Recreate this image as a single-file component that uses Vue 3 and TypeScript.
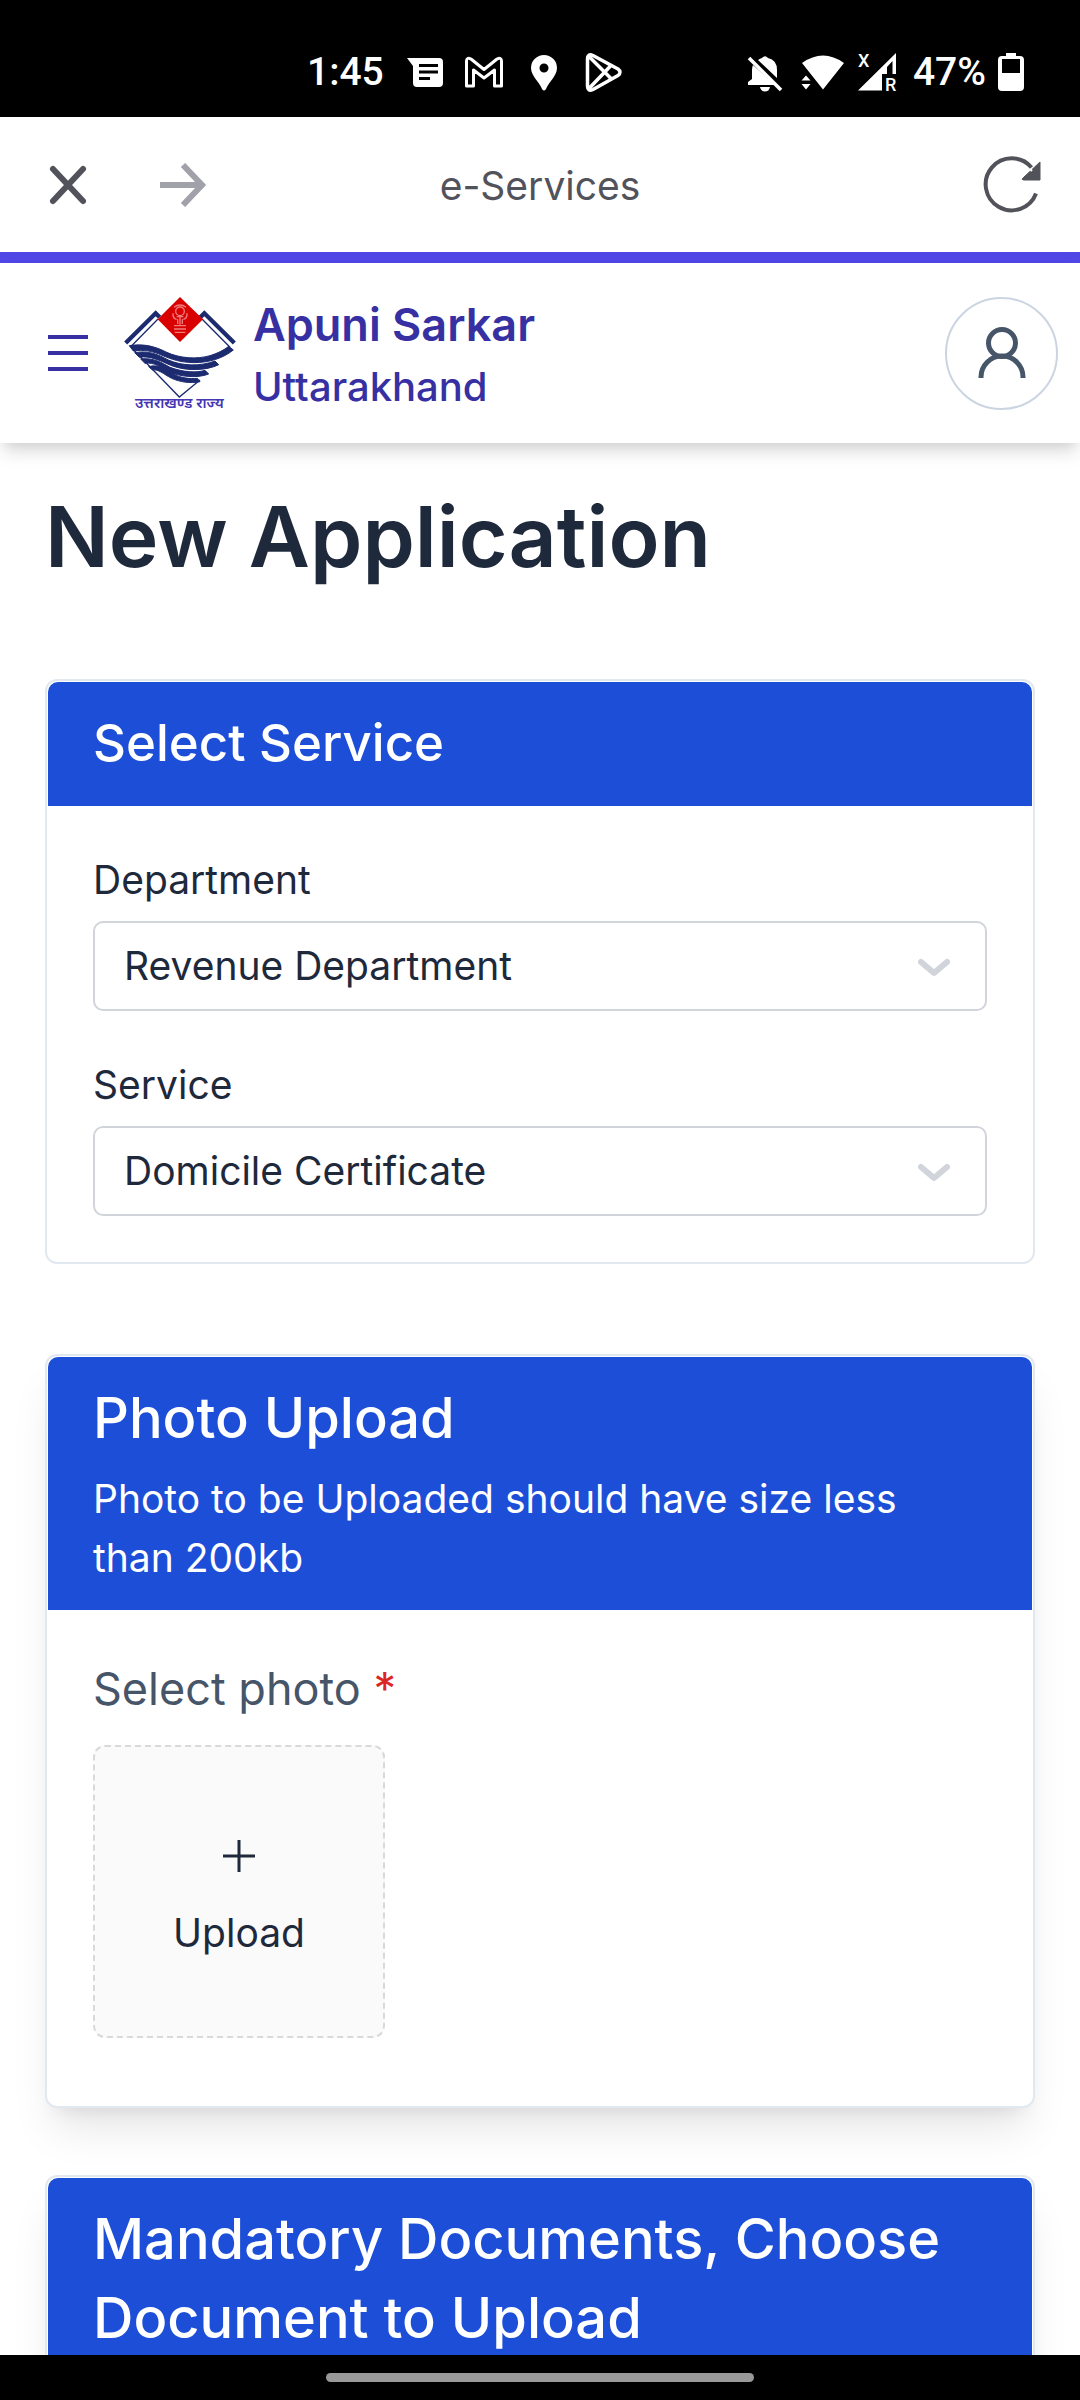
<script setup lang="ts">
import { ref } from 'vue'

interface Field {
  id: string
  label: string
  options: string[]
}

const fields: Field[] = [
  { id: 'department', label: 'Department', options: ['Revenue Department'] },
  { id: 'service', label: 'Service', options: ['Domicile Certificate'] },
]

const selected = ref<Record<string, string>>({
  department: 'Revenue Department',
  service: 'Domicile Certificate',
})
</script>

<template>
  <div class="screen">
    <div class="status">
      <div class="status-left">
        <span class="status-text">1:45</span>
        <svg class="status-icon" viewBox="0 0 40 40" aria-hidden="true">
          <path fill="#fff" fill-rule="evenodd" d="M3 6H35Q39 6 39 10V31Q39 35 35 35H13Q9 35 9 31V14ZM15 12V15H34V12ZM15 18.500V21.500H34V18.500ZM15 25V28H26V25Z" />
        </svg>
        <svg class="status-icon" viewBox="0 0 40 40" aria-hidden="true">
          <path fill="none" stroke="#fff" stroke-width="3" stroke-linejoin="round" d="M2.500 34V9Q2.500 5 7 7L20 17.500L33 7Q37.500 5 37.500 9V34H30.500V18L20 26L9.500 18V34Z" />
        </svg>
        <svg class="status-icon" viewBox="0 0 40 40" aria-hidden="true">
          <path fill="#fff" fill-rule="evenodd" d="M20 3A13 13 0 0 0 7 16C7 24 16 31 18 37Q20 40 22 37C24 31 33 24 33 16A13 13 0 0 0 20 3ZM20 11.500A4.500 4.500 0 1 1 20 20.500A4.500 4.500 0 1 1 20 11.500Z" />
        </svg>
        <svg class="status-icon" viewBox="0 0 40 40" aria-hidden="true">
          <path fill="none" stroke="#fff" stroke-width="3.500" stroke-linejoin="round" d="M3.500 7Q3.500 1 9 3.500L34 17Q38 20 34 23.500L9 37.500Q3.500 40 3.500 34ZM5 4.500L27 26.500M5 36.500L27 13.500" />
        </svg>
      </div>
      <div class="status-right">
        <svg class="status-icon" viewBox="0 0 40 40" aria-hidden="true">
          <path fill="#fff" d="M8 13L30 33H3V30L7 27V18Q7 15 8 13ZM13 8Q15 6.500 17 6Q20 2.500 23 6Q32 8 32 18V26ZM15 35H25Q24 39.500 20 39.500T15 35Z" />
          <path stroke="#fff" stroke-width="3.500" d="M4 6L36 38" />
        </svg>
        <svg class="wifi" viewBox="0 0 44 40" aria-hidden="true">
          <path fill="#fff" d="M1 11Q22 -4 43 11L22 37.500ZM5 23.500L9.500 28.500H0.500ZM0.500 32H9.500L5 37.500Z" />
        </svg>
        <svg class="signal" viewBox="-4 -6 48 52" aria-hidden="true">
          <path fill="#fff" fill-rule="evenodd" d="M1 38.500L39 1V22H35.500V9L30 15V22H25V38.500Z" />
          <text x="1" y="15" class="sim-mark">X</text>
          <text x="28" y="39" class="sim-mark">R</text>
        </svg>
        <span class="status-text">47%</span>
        <svg class="battery" viewBox="0 0 26 40" aria-hidden="true">
          <path fill="#fff" fill-rule="evenodd" d="M8 1H18V4H22Q26 4 26 8V35Q26 39 22 39H4Q0 39 0 35V8Q0 4 4 4H8ZM4 7V21H22V7Z" />
        </svg>
      </div>
    </div>

    <div class="toolbar">
      <div class="toolbar-side">
        <button class="icon-button" type="button" aria-label="Close">
          <svg width="44" height="44" viewBox="0 0 44 44"><path d="M7 6L37 38M37 6L7 38" stroke="#52525b" stroke-width="6" stroke-linecap="round" /></svg>
        </button>
        <button class="icon-button" type="button" aria-label="Forward">
          <svg width="50" height="44" viewBox="0 0 50 44"><path d="M2 22H44M25 2L44 22L25 42" fill="none" stroke="#a1a1aa" stroke-width="6" /></svg>
        </button>
      </div>
      <span class="toolbar-title">e-Services</span>
      <div class="toolbar-side end">
        <button class="icon-button" type="button" aria-label="Reload">
          <svg width="60" height="58" viewBox="0 0 60 58">
            <path d="M49.500 11.500A26 26 0 1 0 54 37.500" fill="none" stroke="#52525b" stroke-width="4" />
            <path d="M41 22L58 6V24H42Q39 24 41 22Z" fill="#52525b" stroke="#52525b" stroke-width="1" />
            <path d="M48 13L50 15" stroke="#fff" stroke-width="2" />
          </svg>
        </button>
      </div>
    </div>

    <header class="header">
      <button class="icon-button" type="button" aria-label="Menu">
        <svg width="40" height="40" viewBox="0 0 40 40"><path d="M0 4H40M0 20H40M0 36H40" stroke="#3730a3" stroke-width="4" /></svg>
      </button>
      <svg class="logo" viewBox="72 54 336 390" role="img" aria-label="उत्तराखण्ड राज्य">
        <g fill="none" stroke="#1c2a70">
          <path stroke-width="13" d="M77 219L167 130L179 142M403 219L313 130L301 142" />
          <path stroke-width="4" d="M174 147L92 230L150 290L238 381L300 330M306 147L390 232" />
        </g>
        <g fill="#1c2a70" stroke="#1c2a70" stroke-width="3">
          <path d="M88 227C130 220 165 229 198 246C240 266 292 268 330 257C355 249 372 240 386 229L400 240C370 264 330 278 280 278C240 277 215 268 186 256C158 243 130 238 100 243Z" />
          <path d="M104 248C150 240 175 255 205 270C245 288 300 290 345 273L356 284C320 302 260 304 215 287C180 272 150 256 118 262Z" />
          <path d="M122 267C160 262 185 278 210 292C250 307 290 309 315 301L326 312C290 326 240 320 205 305C180 292 165 276 135 280Z" />
          <path d="M146 290C175 281 195 299 220 312C245 325 270 327 292 325L300 335C270 341 240 336 215 325C190 312 175 297 158 300Z" />
        </g>
        <path fill="#d80000" d="M240 81L309 148L240 216L173 148Z" />
        <g fill="none" stroke="#ef7d7d" stroke-width="4">
          <circle cx="240" cy="124" r="13" />
          <path d="M222 112Q240 98 258 112M219 130Q218 146 230 148M261 130Q262 146 250 148M230 140H250M233 148V162M240 140V164M247 148V162M222 167H258M222 177H258M224 187H256" />
        </g>
        <text x="238" y="415" text-anchor="middle" class="logo-text">उत्तराखण्ड राज्य</text>
      </svg>
      <div class="brand">
        <span class="brand-name">Apuni Sarkar</span>
        <span class="brand-region">Uttarakhand</span>
      </div>
      <button class="avatar" type="button" aria-label="Account">
        <svg width="52" height="56" viewBox="0 0 52 56"><g fill="none" stroke="#475569" stroke-width="5"><circle cx="26" cy="18" r="13.500" /><path d="M5 53V52A21 21 0 0 1 47 52V53" /></g></svg>
      </button>
    </header>

    <main class="content">
      <h1>New Application</h1>

      <section class="card">
        <div class="card-head single"><h2>Select Service</h2></div>
        <div class="card-body fields">
          <div v-for="field in fields" :key="field.id" class="field">
            <label :for="field.id">{{ field.label }}</label>
            <div class="select-wrap">
              <select :id="field.id" v-model="selected[field.id]">
                <option v-for="option in field.options" :key="option">{{ option }}</option>
              </select>
              <svg class="chevron" width="34" height="22" viewBox="0 0 34 22" aria-hidden="true"><path d="M4 5L17 16L30 5" fill="none" stroke="#d1d5db" stroke-width="6" stroke-linecap="round" stroke-linejoin="round" /></svg>
            </div>
          </div>
        </div>
      </section>

      <section class="card raised">
        <div class="card-head">
          <h2 class="large">Photo Upload</h2>
          <p>Photo to be Uploaded should have size less than 200kb</p>
        </div>
        <div class="card-body photo">
          <label class="photo-label" for="photo">Select photo <span class="required">*</span></label>
          <div class="upload">
            <svg width="34" height="34" viewBox="0 0 34 34" aria-hidden="true"><path d="M17 1V33M1 17H33" stroke="#1e293b" stroke-width="3" /></svg>
            <span>Upload</span>
            <input id="photo" type="file" accept="image/*" />
          </div>
        </div>
      </section>

      <section class="card raised">
        <div class="card-head">
          <h2 class="large">Mandatory Documents, Choose Document to Upload</h2>
        </div>
      </section>
    </main>

    <div class="nav-bar"><div class="nav-handle"></div></div>
  </div>
</template>

<style>
body {
  margin: 0;
  background: #fff;
}
</style>

<style scoped>
.screen {
  display: flex;
  flex-direction: column;
  height: 100vh;
  overflow: hidden;
  background: #fff;
  color: #1e293b;
  font-family: Inter, "Noto Sans", sans-serif;
  font-size: 39px;
  line-height: 60px;
}
.screen *,
.screen *::before {
  box-sizing: border-box;
}
h1,
h2,
p {
  margin: 0;
}
button {
  padding: 0;
  border: 0;
  background: none;
  font: inherit;
}
svg {
  display: block;
  flex: none;
}

/* System status bar */
.status {
  flex: none;
  display: flex;
  justify-content: space-between;
  height: 117px;
  padding: 27px 56px 0 307px;
  background: #000;
  color: #fff;
}
.status-left,
.status-right {
  display: flex;
  align-items: center;
}
.status-left {
  gap: 20px;
}
.status-right {
  gap: 12px;
}
.status-text {
  font-family: Roboto, sans-serif;
  font-size: 39px;
  font-weight: 500;
  line-height: 40px;
}
.status-icon {
  width: 40px;
  height: 40px;
}
.status-right .status-icon {
  margin-right: 4px;
}
.wifi {
  width: 44px;
  height: 40px;
}
.signal {
  width: 48px;
  height: 52px;
  margin-left: -4px;
}
.battery {
  width: 26px;
  height: 40px;
}
.sim-mark {
  fill: #fff;
  font: 500 18px Roboto, sans-serif;
}

/* In-app browser toolbar */
.toolbar {
  flex: none;
  display: flex;
  align-items: center;
  height: 146px;
  padding: 0 38px 0 46px;
  border-bottom: 11px solid #4f46e5;
  color: #52525b;
}
.toolbar-side {
  flex: 1;
  display: flex;
  gap: 68px;
}
.toolbar-side.end {
  justify-content: flex-end;
}
.toolbar-title {
  margin-right: 8px;
  padding-top: 3px;
}

/* Site header */
.header {
  flex: none;
  position: relative;
  z-index: 1;
  display: flex;
  align-items: center;
  height: 180px;
  padding: 0 22px 0 48px;
  background: #fff;
  box-shadow: 0 12px 17px -3px rgba(0, 0, 0, 0.13), 0 6px 12px -6px rgba(0, 0, 0, 0.1);
  color: #3730a3;
}
.logo {
  width: 112px;
  height: 130px;
  margin-left: 36px;
}
.logo-text {
  fill: #4636b4;
  font: 600 44px "Noto Sans Devanagari", "Noto Sans", sans-serif;
}
.brand {
  flex: 1;
  display: flex;
  flex-direction: column;
  padding: 6px 0 0 17px;
  line-height: 62px;
}
.brand-name {
  font-size: 45px;
  font-weight: 600;
}
.brand-region {
  font-size: 40px;
  font-weight: 500;
}
.avatar {
  display: flex;
  align-items: center;
  justify-content: center;
  width: 113px;
  height: 113px;
  border: 2px solid #cbd5e1;
  border-radius: 50%;
}

/* Page */
.content {
  flex: 1;
  min-height: 0;
  overflow-y: auto;
  scrollbar-width: none;
  padding: 46px 45px 0;
}
h1 {
  margin-bottom: 94px;
  font-size: 84px;
  font-weight: 600;
  line-height: 96px;
}
.card {
  margin-bottom: 90px;
  padding: 1px;
  border: 2px solid #e2e8f0;
  border-radius: 12px;
  background: #fff;
}
.card.raised {
  margin-bottom: 67px;
  box-shadow: 0 29px 43px -9px rgba(0, 0, 0, 0.1), 0 12px 17px -12px rgba(0, 0, 0, 0.1);
}
.card-head {
  padding: 22px 45px 23px;
  border-radius: 10px 10px 0 0;
  background: #1d4ed8;
  color: #fff;
}
.card-head.single {
  padding: 21px 45px 23px;
}
.card-head p {
  margin-top: 11px;
  line-height: 59px;
}
h2 {
  font-size: 51px;
  font-weight: 500;
  line-height: 80px;
}
h2.large {
  font-size: 56px;
  line-height: 79px;
}
.card-body {
  padding: 44px 45px 45px;
}
.fields {
  display: flex;
  flex-direction: column;
  gap: 44px;
}
.field {
  display: flex;
  flex-direction: column;
  gap: 11px;
}
.select-wrap {
  position: relative;
}
select {
  display: block;
  width: 100%;
  height: 90px;
  padding: 0 90px 0 29px;
  border: 2px solid #d1d5db;
  border-radius: 10px;
  appearance: none;
  background: #fff;
  color: inherit;
  font: inherit;
}
.chevron {
  position: absolute;
  top: 36px;
  right: 36px;
  pointer-events: none;
}
.card-body.photo {
  padding: 46px 45px 67px;
}
.photo-label {
  display: block;
  margin-bottom: 23px;
  color: #475569;
  font-size: 45px;
  line-height: 66px;
}
.required {
  color: #dc2626;
}
.upload {
  position: relative;
  display: flex;
  flex-direction: column;
  align-items: center;
  justify-content: center;
  gap: 30px;
  width: 292px;
  height: 293px;
  padding-top: 19px;
  border: 2px dashed #d9d9d9;
  border-radius: 12px;
  background: #fafafa;
}
.upload input {
  position: absolute;
  inset: 0;
  width: 100%;
  opacity: 0;
}

/* System gesture bar */
.nav-bar {
  flex: none;
  position: relative;
  z-index: 1;
  display: flex;
  justify-content: center;
  height: 45px;
  padding-top: 18px;
  background: #000;
}
.nav-handle {
  width: 428px;
  height: 9px;
  border-radius: 5px;
  background: #999;
}
</style>
